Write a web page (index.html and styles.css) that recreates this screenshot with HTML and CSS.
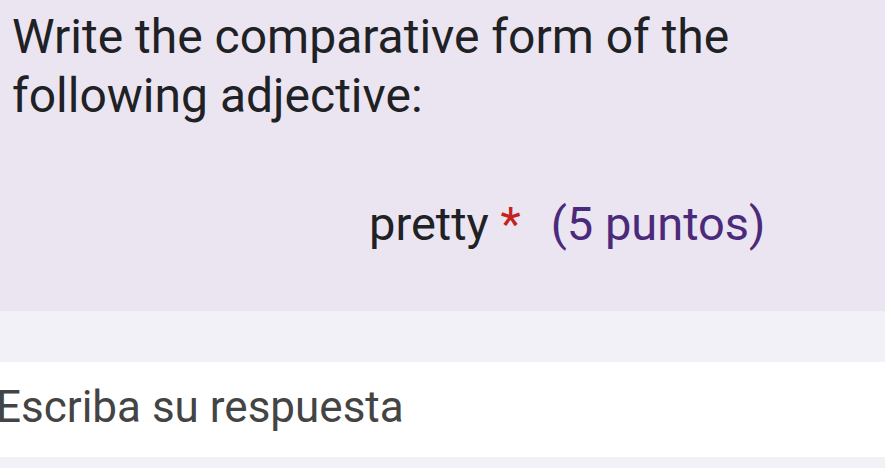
FILE: index.html
```html
<!DOCTYPE html>
<html>
<head>
<meta charset="utf-8">
<link rel="stylesheet" href="styles.css">
</head>
<body>
<div class="page">
  <section class="question">
    <div class="title">Write the comparative form of the following adjective:</div>
    <div class="prompt"><span class="word">pretty</span> <span class="req">*</span><span class="points">(5 puntos)</span></div>
  </section>
  <div class="band"></div>
  <div class="answer">Escriba su respuesta</div>
  <div class="band bottom"></div>
</div>
</body>
</html>
```
FILE: styles.css
```css
html, body {
  margin: 0;
  padding: 0;
}
body {
  width: 885px;
  height: 468px;
  overflow: hidden;
  background: #ffffff;
  font-family: Roboto, "Noto Sans", sans-serif;
}
.page {
  display: flex;
  flex-direction: column;
}
.question {
  background: #ebe5f1;
  padding: 7px 0 57px 12px;
  display: flex;
  flex-direction: column;
  gap: 69px;
}
.title {
  color: #202124;
  width: 780px;
  font-size: 48px;
  line-height: 59px;
}
.prompt {
  padding-left: 357px;
  color: #202124;
  white-space: nowrap;
  font-size: 47px;
  line-height: 60px;
}
.req {
  color: #c5221f;
}
.points {
  color: #4b2a7b;
  margin-left: 30px;
}
.band {
  height: 51px;
  background: #f3f1f8;
}
.band.bottom {
  height: 11px;
}
.answer {
  background: #ffffff;
  color: #444444;
  font-size: 44px;
  line-height: 60px;
  padding: 15px 0 20px 0;
  margin-left: -4px;
}
```
